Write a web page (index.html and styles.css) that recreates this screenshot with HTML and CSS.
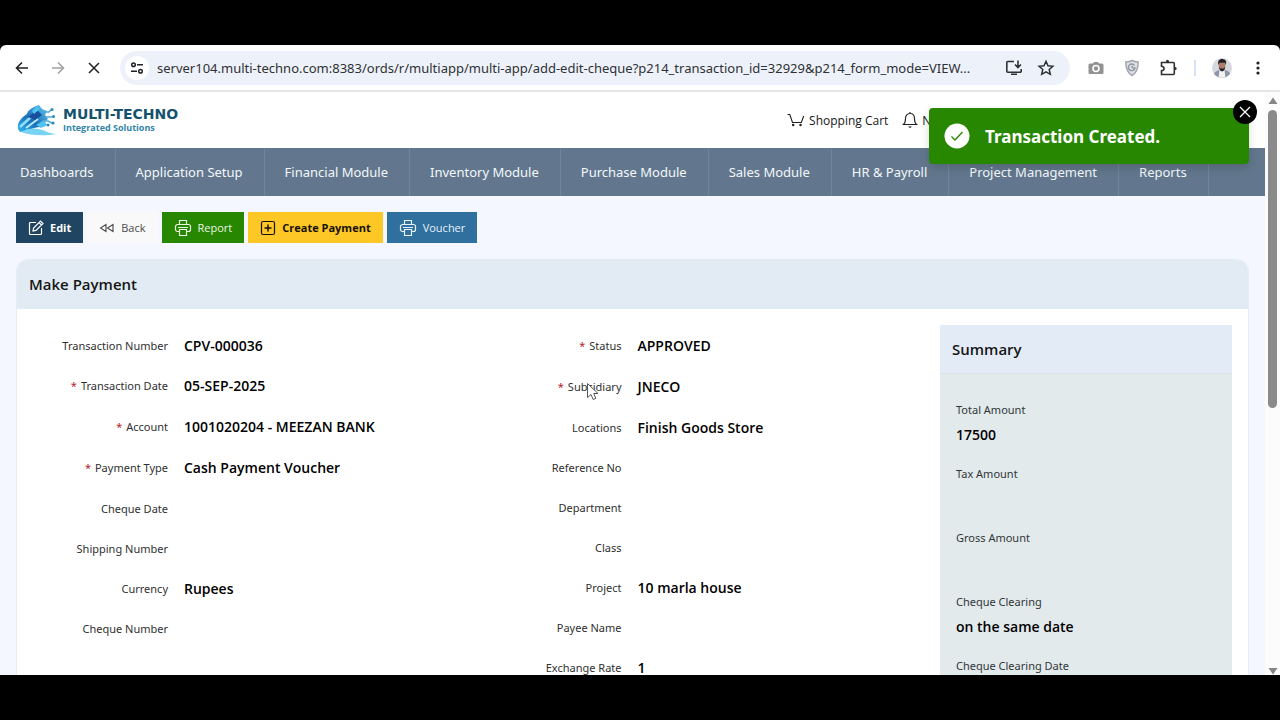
FILE: index.html
```html
<!DOCTYPE html>
<html lang="en">
<head>
<meta charset="utf-8">
<title>Make Payment</title>
<link rel="stylesheet" href="styles.css">
</head>
<body>
<svg class="defs" width="0" height="0" aria-hidden="true">
  <symbol id="printer" viewBox="0 0 18 18"><g fill="none" stroke="currentColor" stroke-width="1.2"><path d="M5.500 5.500v-4h7v4M5.500 12.500H3.500a2 2 0 0 1-2-2v-3a2 2 0 0 1 2-2h11a2 2 0 0 1 2 2v3a2 2 0 0 1-2 2h-2"/><path d="M5.500 10.500h7v6h-7zM4 8.500h10"/></g></symbol>
</svg>
<div class="browser">
  <div class="toolbar">
    <button class="tool" aria-label="Back"><svg width="16" height="16" viewBox="0 0 16 16" fill="none" stroke="#202124" stroke-width="1.6"><path d="M14 8H2.800M8 2.500 2.500 8 8 13.500"/></svg></button>
    <button class="tool" aria-label="Forward"><svg width="16" height="16" viewBox="0 0 16 16" fill="none" stroke="#a2a2a4" stroke-width="1.6"><path d="M2 8h11.200M8 2.500 13.500 8 8 13.500"/></svg></button>
    <button class="tool" aria-label="Stop"><svg width="16" height="16" viewBox="0 0 16 16" fill="none" stroke="#202124" stroke-width="1.5"><path d="m3 3 10 10M13 3 3 13"/></svg></button>
    <div class="address">
      <button class="site" aria-label="Site information"><svg width="14" height="14" viewBox="0 0 14 14" fill="none" stroke="#202124" stroke-width="1.5"><circle cx="3.500" cy="3.800" r="1.800"/><path d="M7 3.800h6M1 10.200h6"/><circle cx="10.500" cy="10.200" r="1.800"/></svg></button>
      <input class="url" aria-label="Address" value="server104.multi-techno.com:8383/ords/r/multiapp/multi-app/add-edit-cheque?p214_transaction_id=32929&amp;p214_form_mode=VIEW...">
      <button class="tool" aria-label="Install app"><svg width="18" height="18" viewBox="0 0 18 18" fill="none" stroke="#303134" stroke-width="1.6"><path d="M9 2.500H2.800a1 1 0 0 0-1 1v8.700a1 1 0 0 0 1 1h12.400a1 1 0 0 0 1-1V10M6 15.200h6M13 1.500V8M10 5.500 13 8.500l3-3"/></svg></button>
      <button class="tool" aria-label="Bookmark"><svg width="18" height="18" viewBox="0 0 18 18" fill="none" stroke="#303134" stroke-width="1.5"><path d="m9 2.300 2 4.500 4.900.500-3.700 3.200 1.100 4.800L9 12.800l-4.300 2.500 1.100-4.800L2.100 7.300 7 6.800z"/></svg></button>
    </div>
    <div class="extensions">
      <button class="tool" aria-label="Screenshot"><svg width="16" height="16" viewBox="0 0 16 16"><path d="M2 3.500h3L6 2h4l1 1.500h3a1.500 1.500 0 0 1 1.500 1.500v7.500A1.500 1.500 0 0 1 14 14H2a1.500 1.500 0 0 1-1.500-1.500V5A1.500 1.500 0 0 1 2 3.500z" fill="#929292"/><circle cx="8" cy="8.500" r="3" fill="#929292" stroke="#fff" stroke-width="1.600"/></svg></button>
      <button class="tool" aria-label="Shield"><svg width="16" height="18" viewBox="0 0 16 18"><path d="M8 1.500c2 1 4 1.500 6.200 1.500 0 6-1.200 10.500-6.200 13.500C3 13.500 1.800 9 1.800 3 4 3 6 2.500 8 1.500z" fill="#dfe1e7" stroke="#a4a8b0" stroke-width="1.500"/><path d="M10.500 6.500A3.300 3.300 0 1 0 11 9H8.500M8.200 6.800v2.500" fill="none" stroke="#9298a2" stroke-width="1.400"/></svg></button>
      <button class="tool" aria-label="Extensions"><svg width="18" height="18" viewBox="0 0 18 18" fill="none" stroke="#303134" stroke-width="1.600"><path d="M2.500 3.500h11.800a1 1 0 0 1 1 1v10a1 1 0 0 1-1 1H2.500v-3.700c3.400-.5 3.400-4.100 0-4.600z"/><path d="M7 3V2.300a1.500 1.500 0 0 1 3 0V3zM15.500 8h.7a1.500 1.500 0 0 1 0 3h-.7z" fill="#303134" stroke="none"/></svg></button>
      <span class="divider"></span>
      <button class="tool" aria-label="Profile"><svg width="20" height="20" viewBox="0 0 20 20"><defs><clipPath id="face"><circle cx="10" cy="10" r="10"/></clipPath></defs><g clip-path="url(#face)"><path fill="#d5d9df" d="M0 0h20v20H0z"/><path d="M1 20c0-5 3-7 6-8h6c4 1 6 3 6 8z" fill="#8d96a6"/><path d="m7.500 12 2.500 2 2.500-2 1 8h-7z" fill="#f3f1f0"/><ellipse cx="10" cy="7.500" rx="3.400" ry="4.800" fill="#ae7d69"/><path d="M6.200 7C5.500 2 8 .8 10.500 1c3 .2 4.300 2 3.400 6L13 4.800H7.500zM7 9c.4 3.400 1.900 4.100 3.100 4.100s2.700-.6 3.100-4.100l-1.700 1.400h-3z" fill="#272023"/></g></svg></button>
      <button class="tool" aria-label="Menu"><svg width="16" height="16" viewBox="0 0 16 16" fill="#202124"><circle cx="8" cy="3" r="1.600"/><circle cx="8" cy="8" r="1.600"/><circle cx="8" cy="13" r="1.600"/></svg></button>
    </div>
  </div>

  <div class="viewport">
    <div class="page">
      <header class="header">
        <a class="brand" href="#">
          <svg width="42" height="34" viewBox="0 0 42 34"><defs><linearGradient id="wing" x1="0" y1="1" x2="1" y2="0"><stop offset="0" stop-color="#35b9ec"/><stop offset=".45" stop-color="#1c6db8"/><stop offset="1" stop-color="#62cdf3"/></linearGradient></defs><path d="M2 26C1 19 5 15 11 11c1-4 5-6 9-8l3-1 3 4 5 2-2 4 3 4-4 3 2 4-6 1c-6 0-14 5-20 5z" fill="url(#wing)"/><path d="M4 24 16 13" stroke="#8fe0fa" stroke-width="2.500"/><path d="m10 25 12-9" stroke="#b4ecfb" stroke-width="2"/><path d="m12 14 9-7 5 5-7 5z" fill="#174f9c"/><path d="m16 8 5-5 3 3-6 5zM20 22l8-5 3 5-6 3z" fill="#4ec3f0"/><path d="M5 29c8-5 17-4 24-1 4 2 8 3 12 3-12 2-26 2-36-2z" fill="#79d3f2"/><path d="M27 9h6l2-2M29 14h7M28 18h4l4 2" fill="none" stroke="#4cabd7" stroke-width="1.400"/><g fill="#2689c0"><circle cx="36" cy="6.500" r="1.500"/><circle cx="37.500" cy="13.500" r="1.500"/><circle cx="37" cy="20" r="1.500"/><circle cx="32" cy="22" r="1.500"/></g></svg>
          <span class="brand-text"><strong>MULTI-TECHNO</strong><span>Integrated Solutions</span></span>
        </a>
        <nav class="quick">
          <a href="#"><svg width="18" height="16" viewBox="0 0 18 16" fill="none" stroke="#202020" stroke-width="1.100"><path d="M.5 2.500h2.300l2.700 8h8.800l2.400-6.500"/><circle cx="6.200" cy="13" r=".7" fill="#202020"/><circle cx="13.500" cy="13" r=".7" fill="#202020"/></svg>Shopping Cart</a>
          <a href="#"><svg width="16" height="18" viewBox="0 0 16 18" fill="none" stroke="#202020" stroke-width="1.100"><path d="M1.500 13.500c1.800-1.500 2-3 2-6 0-3 1.800-5 4.500-5s4.500 2 4.500 5c0 3 .2 4.500 2 6zM6.800 15.500a1.300 1.300 0 0 0 2.400 0M8 1v1.500"/></svg>Notifications</a>
        </nav>
      </header>
      <nav class="menu">
        <a href="#">Dashboards</a><a href="#">Application Setup</a><a href="#">Financial Module</a><a href="#">Inventory Module</a><a href="#">Purchase Module</a><a href="#">Sales Module</a><a href="#">HR &amp; Payroll</a><a href="#">Project Management</a><a href="#">Reports</a>
      </nav>
      <main class="content">
        <div class="actions">
          <button class="btn navy"><svg width="16" height="16" viewBox="0 0 16 16" fill="none" stroke="currentColor" stroke-width="1.200"><path d="M8 2.500H2.500a1 1 0 0 0-1 1v10a1 1 0 0 0 1 1h10a1 1 0 0 0 1-1V8"/><path d="m5 11 .6-3L12.500 1l2.500 2.500L8 10.400zM11 2.500 13.500 5"/></svg>Edit</button>
          <button class="btn plain"><svg width="16" height="16" viewBox="0 0 16 16" fill="none" stroke="currentColor" stroke-width="1.100"><path d="M7 4.500v7L1.500 8zM14 4.500v7L8.500 8z"/></svg>Back</button>
          <button class="btn green"><svg width="18" height="18"><use href="#printer"/></svg>Report</button>
          <button class="btn yellow"><svg width="16" height="16" viewBox="0 0 16 16" fill="none" stroke="currentColor" stroke-width="1.200"><rect x="1.500" y="1.500" width="13" height="13" rx="1.500"/><path d="M8 4.500v7M4.500 8h7" stroke-width="1.500"/></svg>Create Payment</button>
          <button class="btn blue"><svg width="18" height="18"><use href="#printer"/></svg>Voucher</button>
        </div>
        <section class="panel">
          <h1>Make Payment</h1>
          <div class="panel-body">
            <dl class="fields">
              <div><dt>Transaction Number</dt><dd>CPV-000036</dd></div>
              <div class="required"><dt>Transaction Date</dt><dd>05-SEP-2025</dd></div>
              <div class="required"><dt>Account</dt><dd>1001020204 - MEEZAN BANK</dd></div>
              <div class="required"><dt>Payment Type</dt><dd>Cash Payment Voucher</dd></div>
              <div><dt>Cheque Date</dt><dd></dd></div>
              <div><dt>Shipping Number</dt><dd></dd></div>
              <div><dt>Currency</dt><dd>Rupees</dd></div>
              <div><dt>Cheque Number</dt><dd></dd></div>
            </dl>
            <dl class="fields">
              <div class="required"><dt>Status</dt><dd>APPROVED</dd></div>
              <div class="required"><dt>Subsidiary</dt><dd>JNECO</dd></div>
              <div><dt>Locations</dt><dd>Finish Goods Store</dd></div>
              <div><dt>Reference No</dt><dd></dd></div>
              <div><dt>Department</dt><dd></dd></div>
              <div><dt>Class</dt><dd></dd></div>
              <div><dt>Project</dt><dd>10 marla house</dd></div>
              <div><dt>Payee Name</dt><dd></dd></div>
              <div><dt>Exchange Rate</dt><dd>1</dd></div>
            </dl>
            <section class="summary">
              <h2>Summary</h2>
              <dl>
                <div><dt>Total Amount</dt><dd>17500</dd></div>
                <div><dt>Tax Amount</dt><dd></dd></div>
                <div><dt>Gross Amount</dt><dd></dd></div>
                <div><dt>Cheque Clearing</dt><dd>on the same date</dd></div>
                <div><dt>Cheque Clearing Date</dt><dd></dd></div>
              </dl>
            </section>
          </div>
        </section>
      </main>
      <div class="toast" role="status">
        <svg width="26" height="26" viewBox="0 0 26 26"><circle cx="13" cy="13" r="12.500" fill="#fff"/><path d="m7.500 13.500 3.500 3.500 7.500-8" fill="none" stroke="#278701" stroke-width="1.300"/></svg>
        <span>Transaction Created.</span>
        <button aria-label="Close"><svg width="12" height="12" viewBox="0 0 12 12" stroke="#fff" stroke-width="1.300"><path d="m1 1 10 10M11 1 1 11"/></svg></button>
      </div>
    </div>
    <div class="scrollbar">
      <svg width="10" height="8" viewBox="0 0 10 8"><path d="M5 .5 9.500 7h-9z" fill="#858585"/></svg>
      <div class="track"><div class="thumb"></div></div>
      <svg width="10" height="8" viewBox="0 0 10 8"><path d="M5 7.500 9.500 1h-9z" fill="#858585"/></svg>
    </div>
  </div>
</div>
<svg class="cursor" width="14" height="20" viewBox="0 0 14 20"><path d="M1.500 1.500v14l3.500-3 2.200 5 2.600-1.200-2.100-4.800h4.300z" fill="#fff" stroke="#555" stroke-width="1"/></svg>
</body>
</html>
```

FILE: styles.css
```css
* { box-sizing: border-box; }

body {
  margin: 0;
  height: 100vh;
  padding: 45px 0;
  background: #000;
  color: #161616;
  font-family: "Open Sans", "Noto Sans", sans-serif;
  font-size: 14px;
}

a { color: inherit; text-decoration: none; }
button { font: inherit; color: inherit; border: 0; background: none; padding: 0; }
svg { flex: none; display: block; }
dl, dd, h1, h2 { margin: 0; }
.defs { position: absolute; }

.browser {
  height: 100%;
  display: flex;
  flex-direction: column;
  overflow: hidden;
  background: #fff;
  border-radius: 6px 6px 0 0;
}

.toolbar {
  display: flex;
  align-items: center;
  height: 47px;
  flex: none;
  padding: 0 12px 0 4px;
  border-bottom: 2px solid #e6e6e6;
}
.tool { width: 36px; height: 32px; display: grid; place-items: center; }
.toolbar > .tool + .address { margin-left: 8px; }
.address {
  flex: 1;
  display: flex;
  align-items: center;
  height: 34px;
  padding: 0 8px 0 5px;
  border-radius: 17px;
  background: #edf1fa;
}
.address .tool { width: 32px; }
.site {
  width: 24px;
  height: 24px;
  border-radius: 50%;
  background: #fff;
  display: grid;
  place-items: center;
}
.url {
  flex: 1;
  min-width: 0;
  border: 0;
  padding: 0 8px;
  background: none;
  font-family: "Noto Sans", "Open Sans", sans-serif;
  font-size: 13px;
  color: #303134;
  outline: 0;
}
.extensions { display: flex; align-items: center; margin-left: 8px; }
.extensions .tool:last-child { margin-right: -8px; }
.divider { width: 2px; height: 16px; margin: 0 8px; background: #d7e2f6; }

.viewport { flex: 1; min-height: 0; display: flex; }
.page {
  position: relative;
  flex: 1;
  min-width: 0;
  overflow: hidden;
  background: #f4f7ff;
}

.header {
  display: flex;
  align-items: center;
  justify-content: space-between;
  height: 56px;
  padding: 0 272px 0 16px;
  background: #fff;
}
.brand { display: flex; align-items: center; gap: 5px; }
.brand-text { display: flex; flex-direction: column; color: #3286a8; font-size: 9px; font-weight: 700; line-height: 12px; }
.brand-text strong { color: #15526d; font-family: "DejaVu Sans", sans-serif; font-size: 14px; line-height: 16px; }
.quick { display: flex; gap: 14px; font-size: 12px; white-space: nowrap; }
.quick a { display: flex; align-items: center; gap: 4px; }

.menu { display: flex; height: 48px; background: #62778d; color: #f3f7fb; }
.menu a {
  display: flex;
  align-items: center;
  padding: 0 21px 0 20px;
  border-right: 1px solid #718699;
  white-space: nowrap;
  font-family: "Noto Sans", "Open Sans", sans-serif;
  font-size: 13px;
}

.content { padding: 16px; }
.actions { display: flex; gap: 4px; margin-bottom: 16px; }
.btn { display: flex; align-items: center; gap: 6px; height: 31px; padding: 0 12px; font-size: 11px; white-space: nowrap; }
.navy { background: #204563; color: #fff; font-weight: 700; }
.plain { background: #f9f9fa; color: #4b4b4b; }
.green { background: #278701; color: #e9f6e4; }
.yellow { background: #fdc726; color: #161104; font-weight: 700; }
.blue { background: #30709f; color: #e6f1f9; }

.panel { border: 1px solid #e6ecf2; border-radius: 12px 12px 0 0; overflow: hidden; background: #fff; }
.panel h1 { padding: 0 12px; background: #e2ebf3; font-size: 15px; font-weight: 600; line-height: 49px; }
.panel-body { display: grid; grid-template-columns: 1fr 1fr 292px; padding: 16px; }
.fields > div { display: flex; align-items: center; gap: 16px; height: 40px; }
.fields > .required { height: 41px; }
.fields dt { width: 135px; text-align: right; color: #303030; }
.fields dt, .summary dt { font-family: "Noto Sans", "Open Sans", sans-serif; font-size: 11px; }
.required dt::before { content: "*"; margin-right: 4px; color: #b5222e; }
.fields dd, .summary dd { font-weight: 600; color: #000; }

.summary { background: #e3eaec; }
.summary h2 { padding: 0 12px; background: #e3ecf6; border-bottom: 1px solid #dae4e9; font-size: 15px; font-weight: 600; line-height: 48px; }
.summary dl { padding: 24px 16px; }
.summary dl > div { height: 64px; }
.summary dt { line-height: 24px; color: #303638; }
.summary dd { line-height: 26px; }

.toast {
  position: absolute;
  top: 16px;
  right: 16px;
  width: 320px;
  height: 56px;
  display: flex;
  align-items: center;
  gap: 15px;
  padding: 0 15px;
  border-radius: 4px;
  background: #278701;
  color: #fff;
  font-family: "Noto Sans", "Open Sans", sans-serif;
  font-size: 17px;
  font-weight: 700;
  box-shadow: 0 4px 10px rgba(0, 0, 0, .15);
}
.toast button {
  position: absolute;
  top: -8px;
  right: -8px;
  width: 24px;
  height: 24px;
  border-radius: 50%;
  background: #000;
  display: grid;
  place-items: center;
}

.scrollbar { width: 15px; flex: none; display: flex; flex-direction: column; align-items: center; gap: 5px; padding: 5px 0 0; background: #fcfcfc; }
.track { flex: 1; width: 9px; }
.thumb { height: 54%; border-radius: 5px; background: #8a8a8a; }

.cursor { position: absolute; left: 586px; top: 382px; }
```
